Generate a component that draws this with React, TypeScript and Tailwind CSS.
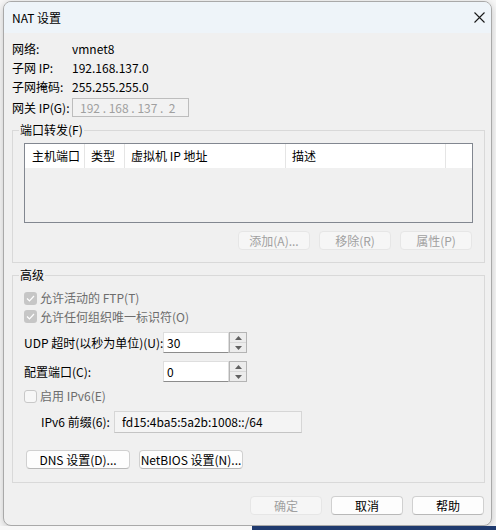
import React from "react";

function Btn({ w, children, disabled }: { w: string; children: React.ReactNode; disabled?: boolean }) {
  return (
    <div
      className={
        "h-[19px] flex items-center justify-center rounded-[4px] border shrink-0 whitespace-nowrap " +
        w +
        (disabled
          ? " bg-[#f6f6f6] border-[#e6e6e6] text-[#a0a0a0]"
          : " bg-[#fdfdfd] border-[#d0d0d0] border-b-[#b8b8b8] text-black")
      }
    >
      {children}
    </div>
  );
}

function Spin({ value }: { value: string }) {
  return (
    <div className="flex h-[21px] shrink-0">
      <div className="w-[66px] h-[21px] bg-white border border-[#dedede] border-b-[#8c8c8c] flex items-center pl-[3px]">
        {value}
      </div>
      <div className="w-[18px] h-[21px] border border-[#b4b4b4] flex flex-col bg-[#f0f0f0]">
        <div className="flex-1 flex items-center justify-center border-b border-[#d8d8d8] bg-[#ececec]">
          <svg width="7" height="4" viewBox="0 0 7 4">
            <path d="M0 4 L3.5 0 L7 4 Z" fill="#606060" />
          </svg>
        </div>
        <div className="flex-1 flex items-center justify-center bg-[#ececec]">
          <svg width="7" height="4" viewBox="0 0 7 4">
            <path d="M0 0 L3.5 4 L7 0 Z" fill="#606060" />
          </svg>
        </div>
      </div>
    </div>
  );
}

function CheckedBox() {
  return (
    <div className="w-[13px] h-[13px] rounded-[3px] bg-[#c6c6c6] flex items-center justify-center shrink-0">
      <svg width="9" height="7" viewBox="0 0 9 7">
        <path d="M1 3.5 L3.5 6 L8 1" stroke="#ffffff" strokeWidth="1.2" fill="none" />
      </svg>
    </div>
  );
}

export default function App() {
  return (
    <div className="w-[496px] h-[530px] bg-[#f7f7f7] overflow-hidden font-['Noto_Sans_CJK_SC',sans-serif] text-[12px] leading-[16px] text-black">
      <div className="ml-[3px] mt-[1px] w-[489px] h-[525px] rounded-[8px] border border-[#a9a9a9] bg-[#f0f0f0] overflow-hidden flex flex-col shadow-[0_2px_8px_rgba(0,0,0,0.2)]">
        <div className="h-[31px] bg-[#eef4f9] flex items-center pl-[8px] pr-[6px] shrink-0">
          <span>NAT 设置</span>
          <svg className="ml-auto" width="11" height="11" viewBox="0 0 11 11">
            <path d="M0.5 0.5 L10.5 10.5 M10.5 0.5 L0.5 10.5" stroke="#1a1a1a" strokeWidth="1.1" />
          </svg>
        </div>

        <div className="flex flex-col pl-[8px] pr-[6px] pt-[7px]">
          <div className="flex flex-col gap-[1px]">
            <div className="h-[18px] flex items-center">
              <span className="w-[60px]">网络:</span>
              <span>vmnet8</span>
            </div>
            <div className="h-[18px] flex items-center">
              <span className="w-[60px]">子网 IP:</span>
              <span>192.168.137.0</span>
            </div>
            <div className="h-[18px] flex items-center">
              <span className="w-[60px]">子网掩码:</span>
              <span>255.255.255.0</span>
            </div>
          </div>
          <div className="h-[19px] mt-[2px] flex items-center">
            <span className="w-[60px]">网关 IP(G):</span>
            <div className="w-[117px] h-[19px] border border-[#bdbdbd] bg-[#f2f2f2] flex items-center pl-[7px] text-[#a0a0a0] whitespace-pre">
              192 . 168 . 137 .  2
            </div>
          </div>

          <fieldset className="mt-[5px] border border-[#d9d9d9] pl-[11px] pr-[11px] pb-[12px]">
            <legend className="-ml-[5px] px-[1px] leading-[16px]">端口转发(F)</legend>
            <div className="mt-[5px] h-[80px] border border-[#828790] flex flex-col bg-[#f0f0f0]">
              <div className="h-[24px] bg-white flex">
                <div className="w-[60px] border-r border-[#e5e5e5] flex items-center pl-[7px]">主机端口</div>
                <div className="w-[40px] border-r border-[#e5e5e5] flex items-center pl-[6px]">类型</div>
                <div className="w-[161px] border-r border-[#e5e5e5] flex items-center pl-[6px]">虚拟机 IP 地址</div>
                <div className="w-[160px] border-r border-[#e5e5e5] flex items-center pl-[6px]">描述</div>
                <div className="flex-1" />
              </div>
            </div>
            <div className="mt-[8px] flex justify-end gap-[9px] pr-[1px]">
              <Btn w="w-[72px]" disabled>添加(A)...</Btn>
              <Btn w="w-[72px]" disabled>移除(R)</Btn>
              <Btn w="w-[72px]" disabled>属性(P)</Btn>
            </div>
          </fieldset>

          <fieldset className="mt-[4px] border border-[#d9d9d9] pl-[11px] pr-[11px] pb-[13px]">
            <legend className="-ml-[5px] px-[1px] leading-[16px]">高级</legend>
            <div className="mt-[6px] h-[18px] flex items-center gap-[3px] text-[#6d6d6d]">
              <CheckedBox />
              <span>允许活动的 FTP(T)</span>
            </div>
            <div className="h-[19px] flex items-center gap-[3px] text-[#6d6d6d]">
              <CheckedBox />
              <span>允许任何组织唯一标识符(O)</span>
            </div>
            <div className="mt-[6px] h-[21px] flex items-center">
              <span className="w-[139px] shrink-0 whitespace-nowrap">UDP 超时(以秒为单位)(U):</span>
              <Spin value="30" />
            </div>
            <div className="mt-[8px] h-[21px] flex items-center">
              <span className="w-[139px] shrink-0 whitespace-nowrap">配置端口(C):</span>
              <Spin value="0" />
            </div>
            <div className="mt-[5px] h-[18px] flex items-center gap-[3px] text-[#6d6d6d]">
              <div className="w-[13px] h-[13px] rounded-[3px] border border-[#c8c8c8] bg-[#f7f7f7] shrink-0" />
              <span>启用 IPv6(E)</span>
            </div>
            <div className="mt-[6px] h-[22px] flex items-center pl-[17px]">
              <span className="w-[73px] shrink-0 whitespace-nowrap">IPv6 前缀(6):</span>
              <div className="w-[188px] h-[22px] border border-[#d6d6d6] border-b-[#c4c4c4] bg-[#f4f4f4] flex items-center pl-[7px]">
                fd15:4ba5:5a2b:1008::/64
              </div>
            </div>
            <div className="mt-[17px] flex gap-[9px] pl-[2px]">
              <Btn w="w-[104px]">DNS 设置(D)...</Btn>
              <Btn w="w-[104px]">NetBIOS 设置(N)...</Btn>
            </div>
          </fieldset>

          <div className="mt-[13px] flex justify-end gap-[9px] pr-[1px]">
            <Btn w="w-[72px]" disabled>确定</Btn>
            <Btn w="w-[72px]">取消</Btn>
            <Btn w="w-[72px]">帮助</Btn>
          </div>
        </div>
      </div>
      <div className="flex h-[4px]">
        <div className="w-[252px] bg-[#f7f7f7]" />
        <div className="flex-1 bg-[#1f3a6e]" />
      </div>
    </div>
  );
}
